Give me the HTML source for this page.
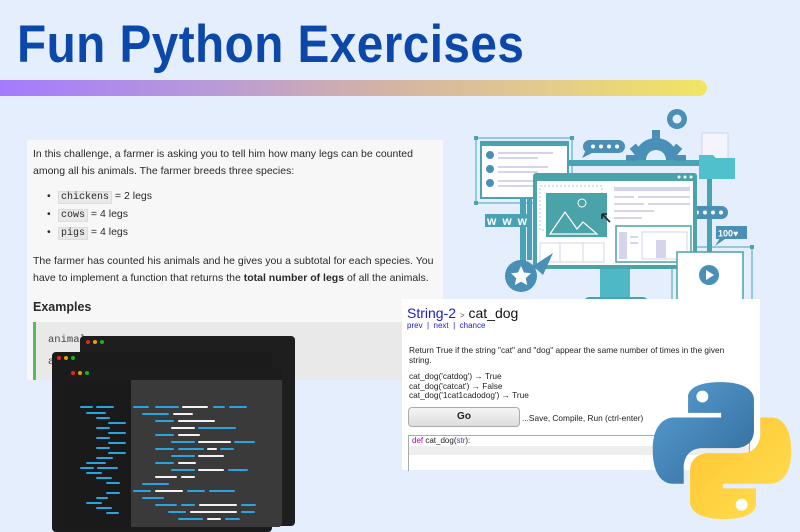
<!DOCTYPE html>
<html><head><meta charset="utf-8"><style>
*{margin:0;padding:0;box-sizing:border-box}
body{width:800px;height:520px;overflow:hidden;background:#e4eefc;position:relative;font-family:"Liberation Sans",sans-serif}
.abs{position:absolute}
#title{left:17px;top:14px;font-size:53px;font-weight:bold;color:#0b48aa;white-space:nowrap;transform:scaleX(0.9);transform-origin:left top;letter-spacing:0.5px}
#bar{left:0;top:80px;width:707px;height:16px;border-radius:0 8px 8px 0;background:linear-gradient(90deg,#a47bfd 0%,#b99ad8 30%,#d4b4a4 55%,#e3cc8c 78%,#f2e562 100%)}
#lp{left:27px;top:140px;width:416px;height:240px;background:#f7f7f7;font-size:10.5px;color:#2a2a2a;line-height:16.5px}
#lp p{position:absolute;left:6px;width:410px}
#lp p.li{left:31px}
.code{font-family:"Liberation Mono",monospace;font-size:10px;background:#e9e9e9;border:1px solid #dcdcdc;padding:0 2px}
.li:before{content:"•";position:absolute;left:-11px}
#ex{left:33px;top:322px;width:410px;height:58px;background:#e9e9e9;border-left:3px solid #5cb85c;font-family:"Liberation Mono",monospace;font-size:10.5px;color:#444}
.win{background:#222;border-radius:4px;overflow:hidden}
.dots span{position:absolute;top:4px;width:4px;height:4px;border-radius:50%}
.ln{position:absolute;height:2px;border-radius:1px}
#cp{left:402px;top:299px;width:358px;height:171px;background:#fff;font-size:8.3px;color:#222}
</style></head><body>

<div id="title" class="abs">Fun Python Exercises</div>
<div id="bar" class="abs"></div>

<svg class="abs" style="left:0;top:0" width="800" height="520" viewBox="0 0 800 520">
 <g fill="none" stroke="#4aa3b5" stroke-width="1">
  <rect x="476" y="138" width="96" height="65"/>
  <rect x="672" y="247" width="80" height="75"/>
 </g>
 <g fill="#4aa3b5">
  <rect x="474" y="136" width="4" height="4"/><rect x="570" y="136" width="4" height="4"/><rect x="474" y="201" width="4" height="4"/>
  <rect x="750" y="245" width="4" height="4"/><rect x="670" y="320" width="4" height="4"/>
 </g>
 <rect x="527" y="160" width="185" height="6" fill="#4aa3b5"/>
 <rect x="527" y="160" width="5" height="100" fill="#4aa3b5"/>
 <rect x="707" y="160" width="5" height="100" fill="#4aa3b5"/>
 <rect x="520" y="180" width="6" height="100" fill="#4aa3b5"/>
 <rect x="481" y="142" width="87" height="56" fill="#fff" stroke="#4aa3b5" stroke-width="2"/>
 <rect x="481" y="142" width="87" height="4" fill="#4aa3b5"/>
 <g fill="#4a8fb5"><circle cx="490" cy="155" r="4"/><circle cx="490" cy="169" r="4"/><circle cx="490" cy="183" r="4"/></g>
 <g fill="#d6d3ec"><rect x="498" y="152" width="55" height="2"/><rect x="498" y="157" width="40" height="2"/><rect x="498" y="166" width="50" height="2"/><rect x="498" y="171" width="40" height="2"/><rect x="498" y="180" width="50" height="2"/><rect x="498" y="185" width="38" height="2"/></g>
 <g fill="#4a8fb5">
  <path d="M634 160 a22 22 0 0 1 44 0 z"/>
  <rect x="632" y="145" width="8" height="10" transform="rotate(-40 636 150)"/><rect x="652" y="130" width="8" height="10"/><rect x="672" y="145" width="8" height="10" transform="rotate(40 676 150)"/>
  <rect x="626" y="155" width="10" height="6"/><rect x="676" y="155" width="10" height="6"/>
  <circle cx="677" cy="119" r="10"/>
 </g>
 <path d="M646 160 a10 10 0 0 1 20 0 z" fill="#e4eefc"/>
 <circle cx="677" cy="119" r="4.5" fill="#e4eefc"/>
 <rect x="583" y="140" width="42" height="13" rx="6.5" fill="#4a8fb5"/>
 <path d="M586 150 l-4 8 l10 -5z" fill="#4a8fb5"/>
 <g fill="#fff"><circle cx="593" cy="146.5" r="2"/><circle cx="601" cy="146.5" r="2"/><circle cx="609" cy="146.5" r="2"/><circle cx="617" cy="146.5" r="2"/></g>
 <rect x="688" y="206" width="40" height="13" rx="6.5" fill="#4a8fb5"/>
 <path d="M692 216 l-5 8 l10 -5z" fill="#4a8fb5"/>
 <g fill="#fff"><circle cx="697" cy="212.5" r="2"/><circle cx="705" cy="212.5" r="2"/><circle cx="713" cy="212.5" r="2"/><circle cx="721" cy="212.5" r="2"/></g>
 <rect x="702" y="133" width="26" height="32" fill="#f4f4fb" stroke="#d6d3ec"/>
 <path d="M699 155 h14 l3 3 h19 v21 h-36z" fill="#4fc0cc"/>
 <rect x="533" y="173" width="164" height="96" rx="3" fill="#4aa3a8"/>
 <rect x="537" y="181" width="156" height="84" fill="#fff"/>
 <g fill="#fff"><circle cx="679" cy="177" r="1.5"/><circle cx="685" cy="177" r="1.5"/><circle cx="691" cy="177" r="1.5"/></g>
 <rect x="540" y="186" width="62" height="44" fill="none" stroke="#b8c4d8" stroke-dasharray="2 2"/>
 <rect x="546" y="193" width="61" height="44" fill="#4aa3a8"/>
 <path d="M550 234 l15 -22 l12 17 l6 -7 l14 12z" fill="none" stroke="#fff" stroke-width="1.2"/>
 <circle cx="582" cy="203" r="4" fill="none" stroke="#fff"/>
 <path d="M602 214 l8 8 m-8 -8 v5 m0 -5 h5" stroke="#223" stroke-width="1.6" fill="none"/>
 <g fill="#d6d3ec"><rect x="614" y="187" width="76" height="4"/><rect x="614" y="196" width="20" height="2"/><rect x="638" y="196" width="52" height="2"/><rect x="614" y="203" width="30" height="2"/><rect x="648" y="203" width="42" height="2"/><rect x="614" y="210" width="40" height="2"/><rect x="614" y="217" width="28" height="2"/></g>
 <rect x="616" y="226" width="75" height="36" fill="#fff" stroke="#4aa3a8" stroke-width="1.5"/>
 <g fill="#d6d3ec"><rect x="619" y="232" width="8" height="27"/><rect x="630" y="236" width="8" height="2"/><rect x="630" y="242" width="8" height="2"/><rect x="642" y="232" width="45" height="27" fill="none" stroke="#d6d3ec"/><rect x="656" y="240" width="10" height="18"/></g>
 <g fill="none" stroke="#d6d3ec"><rect x="540" y="243" width="64" height="19"/><line x1="560" y1="243" x2="560" y2="262"/><line x1="583" y1="243" x2="583" y2="262"/></g>
 <rect x="600" y="269" width="30" height="32" fill="#4fb8c6"/>
 <rect x="584" y="297" width="64" height="12" rx="5" fill="#4aa3a8"/>
 <rect x="485" y="214" width="44" height="13" fill="#4aa3b5"/>
 <text x="487" y="225" font-family="Liberation Sans" font-weight="bold" font-size="12" fill="#fff" textLength="40">www</text>
 <circle cx="521" cy="276" r="16" fill="#4a8fb5"/>
 <path d="M533 266 l20 -13 l-10 22z" fill="#4a8fb5"/>
 <path d="M521 266 l3 6.5 l7 .8 l-5.2 4.8 l1.4 7 l-6.2 -3.5 l-6.2 3.5 l1.4 -7 l-5.2 -4.8 l7 -.8z" fill="#fff"/>
 <rect x="716" y="226" width="31" height="13" fill="#4a8fb5"/>
 <path d="M720 238 l-5 8 l10 -7z" fill="#4a8fb5"/>
 <text x="718" y="236.5" font-family="Liberation Sans" font-weight="bold" font-size="9" fill="#fff">100♥</text>
 <rect x="677" y="252" width="66" height="48" fill="#fff" stroke="#4aa3a8" stroke-width="1.5"/>
 <circle cx="709" cy="275" r="10" fill="#4a8fb5"/>
 <path d="M706 270 l8 5 l-8 5z" fill="#fff"/>
</svg>

<div id="lp" class="abs">
 <p style="top:6px">In this challenge, a farmer is asking you to tell him how many legs can be counted among all his animals. The farmer breeds three species:</p>
 <p style="top:48px" class="li"><span class="code">chickens</span> = 2 legs</p>
 <p style="top:66px" class="li"><span class="code">cows</span> = 4 legs</p>
 <p style="top:84px" class="li"><span class="code">pigs</span> = 4 legs</p>
 <p style="top:113px">The farmer has counted his animals and he gives you a subtotal for each species. You have to implement a function that returns the <b>total number of legs</b> of all the animals.</p>
 <p style="top:159px;font-weight:bold;font-size:12.5px">Examples</p>
</div>
<div id="ex" class="abs"><div style="position:absolute;left:12px;top:12px">animals</div><div style="position:absolute;left:12px;top:34px">a</div></div>

<div class="abs win" style="left:80px;top:336px;width:215px;height:190px;background:#1e1e1e">
 <div class="dots"><span style="left:6px;background:#e22"></span><span style="left:13px;background:#e9a000"></span><span style="left:20px;background:#1b1"></span></div>
</div>
<div class="abs win" style="left:52px;top:352px;width:220px;height:180px;background:#1b1b1b">
 <div class="dots"><span style="left:5px;background:#e22"></span><span style="left:12px;background:#e9a000"></span><span style="left:19px;background:#1b1"></span></div>
</div>
<div class="abs win" style="left:66px;top:367px;width:216px;height:160px;background:#1c1c1c">
 <div class="dots"><span style="left:5px;background:#e22"></span><span style="left:12px;background:#e9a000"></span><span style="left:19px;background:#1b1"></span></div>
 <div class="abs" style="left:0;top:13px;width:65px;height:150px;background:#1a1a1a">
  <div class="ln" style="left:14px;top:26px;width:13px;background:#2aa4dc"></div><div class="ln" style="left:30px;top:26px;width:18px;background:#2aa4dc"></div>
  <div class="ln" style="left:20px;top:32px;width:20px;background:#2aa4dc"></div>
  <div class="ln" style="left:30px;top:37px;width:14px;background:#2aa4dc"></div>
  <div class="ln" style="left:42px;top:42px;width:18px;background:#2aa4dc"></div>
  <div class="ln" style="left:30px;top:47px;width:14px;background:#2aa4dc"></div>
  <div class="ln" style="left:42px;top:52px;width:18px;background:#2aa4dc"></div>
  <div class="ln" style="left:30px;top:57px;width:14px;background:#2aa4dc"></div>
  <div class="ln" style="left:42px;top:62px;width:18px;background:#2aa4dc"></div>
  <div class="ln" style="left:30px;top:67px;width:14px;background:#2aa4dc"></div>
  <div class="ln" style="left:42px;top:72px;width:18px;background:#2aa4dc"></div>
  <div class="ln" style="left:30px;top:77px;width:17px;background:#2aa4dc"></div>
  <div class="ln" style="left:20px;top:82px;width:20px;background:#2aa4dc"></div>
  <div class="ln" style="left:14px;top:87px;width:14px;background:#2aa4dc"></div><div class="ln" style="left:31px;top:87px;width:21px;background:#2aa4dc"></div>
  <div class="ln" style="left:20px;top:92px;width:16px;background:#2aa4dc"></div>
  <div class="ln" style="left:30px;top:97px;width:16px;background:#2aa4dc"></div>
  <div class="ln" style="left:40px;top:102px;width:14px;background:#2aa4dc"></div>
  <div class="ln" style="left:40px;top:112px;width:14px;background:#2aa4dc"></div>
  <div class="ln" style="left:30px;top:117px;width:12px;background:#2aa4dc"></div>
  <div class="ln" style="left:20px;top:122px;width:16px;background:#2aa4dc"></div>
  <div class="ln" style="left:30px;top:127px;width:16px;background:#2aa4dc"></div>
  <div class="ln" style="left:40px;top:132px;width:13px;background:#2aa4dc"></div>
 </div>
 <div class="abs" style="left:65px;top:13px;width:151px;height:150px;background:#3a3a3a">
  <div class="ln" style="left:2px;top:26px;width:16px;background:#2aa4dc"></div><div class="ln" style="left:24px;top:26px;width:24px;background:#2aa4dc"></div><div class="ln" style="left:51px;top:26px;width:26px;background:#f2f2f2"></div><div class="ln" style="left:82px;top:26px;width:12px;background:#2aa4dc"></div><div class="ln" style="left:98px;top:26px;width:18px;background:#2aa4dc"></div>
  <div class="ln" style="left:11px;top:33px;width:27px;background:#2aa4dc"></div><div class="ln" style="left:42px;top:33px;width:20px;background:#f2f2f2"></div>
  <div class="ln" style="left:24px;top:40px;width:19px;background:#2aa4dc"></div><div class="ln" style="left:47px;top:40px;width:37px;background:#f2f2f2"></div>
  <div class="ln" style="left:40px;top:47px;width:24px;background:#f2f2f2"></div><div class="ln" style="left:67px;top:47px;width:38px;background:#2aa4dc"></div>
  <div class="ln" style="left:24px;top:54px;width:19px;background:#2aa4dc"></div><div class="ln" style="left:47px;top:54px;width:22px;background:#f2f2f2"></div>
  <div class="ln" style="left:40px;top:61px;width:24px;background:#2aa4dc"></div><div class="ln" style="left:67px;top:61px;width:33px;background:#f2f2f2"></div><div class="ln" style="left:103px;top:61px;width:21px;background:#2aa4dc"></div>
  <div class="ln" style="left:24px;top:68px;width:19px;background:#2aa4dc"></div><div class="ln" style="left:47px;top:68px;width:26px;background:#2aa4dc"></div><div class="ln" style="left:76px;top:68px;width:10px;background:#f2f2f2"></div><div class="ln" style="left:89px;top:68px;width:14px;background:#2aa4dc"></div>
  <div class="ln" style="left:40px;top:75px;width:24px;background:#2aa4dc"></div><div class="ln" style="left:67px;top:75px;width:26px;background:#f2f2f2"></div>
  <div class="ln" style="left:24px;top:82px;width:19px;background:#2aa4dc"></div><div class="ln" style="left:47px;top:82px;width:18px;background:#f2f2f2"></div>
  <div class="ln" style="left:40px;top:89px;width:24px;background:#2aa4dc"></div><div class="ln" style="left:67px;top:89px;width:26px;background:#f2f2f2"></div><div class="ln" style="left:97px;top:89px;width:20px;background:#2aa4dc"></div>
  <div class="ln" style="left:24px;top:96px;width:22px;background:#f2f2f2"></div><div class="ln" style="left:50px;top:96px;width:14px;background:#f2f2f2"></div>
  <div class="ln" style="left:11px;top:103px;width:27px;background:#2aa4dc"></div>
  <div class="ln" style="left:2px;top:110px;width:18px;background:#2aa4dc"></div><div class="ln" style="left:24px;top:110px;width:28px;background:#f2f2f2"></div><div class="ln" style="left:56px;top:110px;width:18px;background:#2aa4dc"></div><div class="ln" style="left:78px;top:110px;width:26px;background:#2aa4dc"></div>
  <div class="ln" style="left:11px;top:117px;width:22px;background:#2aa4dc"></div>
  <div class="ln" style="left:24px;top:124px;width:22px;background:#2aa4dc"></div><div class="ln" style="left:50px;top:124px;width:14px;background:#2aa4dc"></div><div class="ln" style="left:68px;top:124px;width:38px;background:#f2f2f2"></div><div class="ln" style="left:110px;top:124px;width:15px;background:#2aa4dc"></div>
  <div class="ln" style="left:37px;top:131px;width:18px;background:#2aa4dc"></div><div class="ln" style="left:59px;top:131px;width:47px;background:#f2f2f2"></div><div class="ln" style="left:110px;top:131px;width:14px;background:#2aa4dc"></div>
  <div class="ln" style="left:47px;top:138px;width:25px;background:#2aa4dc"></div><div class="ln" style="left:76px;top:138px;width:14px;background:#f2f2f2"></div><div class="ln" style="left:94px;top:138px;width:15px;background:#2aa4dc"></div>
 </div>
</div>

<div id="cp" class="abs">
 <div class="abs" style="left:5px;top:6px;font-size:14px;color:#1a1ae0">String-2 <span style="font-size:8px;color:#555">&gt;</span> <span style="color:#111">cat_dog</span></div>
 <div class="abs" style="left:5px;top:22px;font-size:8px;color:#1a1ae0">prev &nbsp;| &nbsp;next &nbsp;| &nbsp;chance</div>
 <div class="abs" style="left:7px;top:47px;width:340px;line-height:9.5px">Return True if the string "cat" and "dog" appear the same number of times in the given string.</div>
 <div class="abs" style="left:7px;top:73px;line-height:9.5px">cat_dog('catdog') → True<br>cat_dog('catcat') → False<br>cat_dog('1cat1cadodog') → True</div>
 <div class="abs" style="left:6px;top:108px;width:112px;height:20px;border:1px solid #aaa;border-radius:4px;background:linear-gradient(#f4f4f4,#ddd);text-align:center;font-weight:bold;font-size:10px;line-height:18px">Go</div>
 <div class="abs" style="left:120px;top:114px">...Save, Compile, Run (ctrl-enter)</div>
 <div class="abs" style="left:6px;top:136px;width:342px;height:36px;border:1px solid #aaa;border-bottom:none">
  <div style="height:10px;font-size:8px;padding-left:3px;line-height:10px"><span style="color:#a0a">def</span> cat_dog(<span style="color:#449">str</span>):</div>
  <div style="height:9px;background:#eee"></div>
 </div>
</div>

<svg class="abs" style="left:652px;top:381px" width="140" height="138" viewBox="0 0 112 111">
 <defs>
  <linearGradient id="b" x1="0" y1="0" x2="1" y2="1"><stop offset="0" stop-color="#5a9fd4"/><stop offset="1" stop-color="#306998"/></linearGradient>
  <linearGradient id="y" x1="0" y1="0" x2="1" y2="1"><stop offset="0" stop-color="#ffe052"/><stop offset="1" stop-color="#ffc331"/></linearGradient>
 </defs>
 <path d="M54.9 0.9C27 0.9 28.7 13 28.7 13L28.7 25.6L55.3 25.6L55.3 29.4L18.1 29.4C18.1 29.4 0.3 27.4 0.3 55.5C0.3 83.6 15.9 82.6 15.9 82.6L25.2 82.6L25.2 69.6C25.2 69.6 24.7 54 40.5 54L66.9 54C66.9 54 81.7 54.2 81.7 39.7L81.7 15.7C81.7 15.7 84 0.9 54.9 0.9Z" fill="url(#b)"/>
 <circle cx="40.2" cy="12.5" r="4.8" fill="#fff"/>
 <g transform="rotate(180 56 56)">
  <path d="M54.9 0.9C27 0.9 28.7 13 28.7 13L28.7 25.6L55.3 25.6L55.3 29.4L18.1 29.4C18.1 29.4 0.3 27.4 0.3 55.5C0.3 83.6 15.9 82.6 15.9 82.6L25.2 82.6L25.2 69.6C25.2 69.6 24.7 54 40.5 54L66.9 54C66.9 54 81.7 54.2 81.7 39.7L81.7 15.7C81.7 15.7 84 0.9 54.9 0.9Z" fill="url(#y)"/>
  <circle cx="40.2" cy="12.5" r="4.8" fill="#fff"/>
 </g>
</svg>
</body></html>
